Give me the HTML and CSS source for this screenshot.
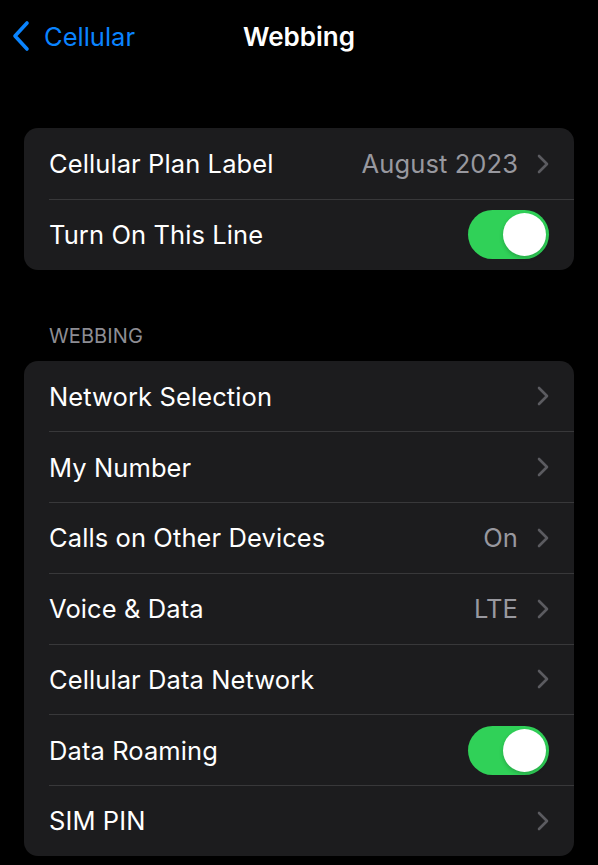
FILE: index.html
```html
<!DOCTYPE html>
<html>
<head>
<meta charset="utf-8">
<link rel="stylesheet" href="styles.css">
</head>
<body>
<div class="screen">
  <header class="navbar">
    <a class="back">
      <svg class="back-chev" width="20" height="32" viewBox="0 0 20 32"><path d="M16 3 L4 16 L16 29" fill="none" stroke="#0a84ff" stroke-width="3.6" stroke-linecap="round" stroke-linejoin="round"/></svg>
      <span>Cellular</span>
    </a>
    <h1 class="title">Webbing</h1>
  </header>

  <section class="group first">
    <div class="row">
      <span class="label">Cellular Plan Label</span>
      <span class="value">August 2023</span>
      <svg class="chev" width="12" height="20" viewBox="0 0 12 20"><path d="M2 2 L10 10 L2 18" fill="none" stroke="#5b5b60" stroke-width="2.6" stroke-linecap="round" stroke-linejoin="round"/></svg>
    </div>
    <div class="row">
      <span class="label">Turn On This Line</span>
      <span class="toggle on"><span class="knob"></span></span>
    </div>
  </section>

  <div class="section-header">WEBBING</div>

  <section class="group">
    <div class="row">
      <span class="label">Network Selection</span>
      <svg class="chev" width="12" height="20" viewBox="0 0 12 20"><path d="M2 2 L10 10 L2 18" fill="none" stroke="#5b5b60" stroke-width="2.6" stroke-linecap="round" stroke-linejoin="round"/></svg>
    </div>
    <div class="row">
      <span class="label">My Number</span>
      <svg class="chev" width="12" height="20" viewBox="0 0 12 20"><path d="M2 2 L10 10 L2 18" fill="none" stroke="#5b5b60" stroke-width="2.6" stroke-linecap="round" stroke-linejoin="round"/></svg>
    </div>
    <div class="row">
      <span class="label">Calls on Other Devices</span>
      <span class="value">On</span>
      <svg class="chev" width="12" height="20" viewBox="0 0 12 20"><path d="M2 2 L10 10 L2 18" fill="none" stroke="#5b5b60" stroke-width="2.6" stroke-linecap="round" stroke-linejoin="round"/></svg>
    </div>
    <div class="row">
      <span class="label">Voice &amp; Data</span>
      <span class="value">LTE</span>
      <svg class="chev" width="12" height="20" viewBox="0 0 12 20"><path d="M2 2 L10 10 L2 18" fill="none" stroke="#5b5b60" stroke-width="2.6" stroke-linecap="round" stroke-linejoin="round"/></svg>
    </div>
    <div class="row">
      <span class="label">Cellular Data Network</span>
      <svg class="chev" width="12" height="20" viewBox="0 0 12 20"><path d="M2 2 L10 10 L2 18" fill="none" stroke="#5b5b60" stroke-width="2.6" stroke-linecap="round" stroke-linejoin="round"/></svg>
    </div>
    <div class="row">
      <span class="label">Data Roaming</span>
      <span class="toggle on"><span class="knob"></span></span>
    </div>
    <div class="row">
      <span class="label">SIM PIN</span>
      <svg class="chev" width="12" height="20" viewBox="0 0 12 20"><path d="M2 2 L10 10 L2 18" fill="none" stroke="#5b5b60" stroke-width="2.6" stroke-linecap="round" stroke-linejoin="round"/></svg>
    </div>
  </section>
</div>
</body>
</html>
```

FILE: styles.css
```css
* { box-sizing: border-box; }
html, body {
  margin: 0;
  padding: 0;
  background: #000;
}
body {
  font-family: Inter, "Noto Sans", "Liberation Sans", sans-serif;
  color: #fff;
  -webkit-font-smoothing: antialiased;
}
.screen {
  width: 598px;
  height: 865px;
  overflow: hidden;
  padding: 0 24px;
}
.navbar {
  position: relative;
  height: 74px;
  display: flex;
  align-items: center;
  justify-content: center;
}
.back {
  position: absolute;
  left: -13px;
  top: 20px;
  display: flex;
  align-items: center;
  gap: 13px;
  color: #0a84ff;
  font-size: 25.5px;
  letter-spacing: 0;
}
.back-chev { display: block; }
.title {
  margin: 0 0 2px 0;
  font-size: 26px;
  font-weight: 600;
  letter-spacing: 0;
}
.group {
  background: #1c1c1e;
  border-radius: 14px;
  overflow: hidden;
}
.group.first { margin-top: 54px; }
.row {
  height: 70.75px;
  display: flex;
  align-items: center;
  padding: 1px 25px 0 25px;
  position: relative;
}
.row + .row::before {
  content: "";
  position: absolute;
  top: 0;
  left: 25px;
  right: 0;
  height: 1px;
  background: #38383a;
}
.label {
  flex: 1;
  font-size: 25.5px;
  letter-spacing: 0.1px;
  color: #fff;
}
.value {
  font-size: 25.5px;
  letter-spacing: 0.1px;
  color: #98989f;
  margin-right: 19px;
}
.chev { display: block; }
.toggle {
  width: 81px;
  height: 49px;
  border-radius: 25px;
  background: #3a3a3c;
  position: relative;
}
.toggle.on { background: #30d158; }
.knob {
  position: absolute;
  top: 3px;
  right: 3px;
  width: 43px;
  height: 43px;
  border-radius: 50%;
  background: #fff;
  box-shadow: 0 2px 4px rgba(0,0,0,0.2);
}
.section-header {
  margin: 54px 0 0 25px;
  height: 37px;
  font-size: 20px;
  color: #8d8d93;
  letter-spacing: 0.1px;
}
```
